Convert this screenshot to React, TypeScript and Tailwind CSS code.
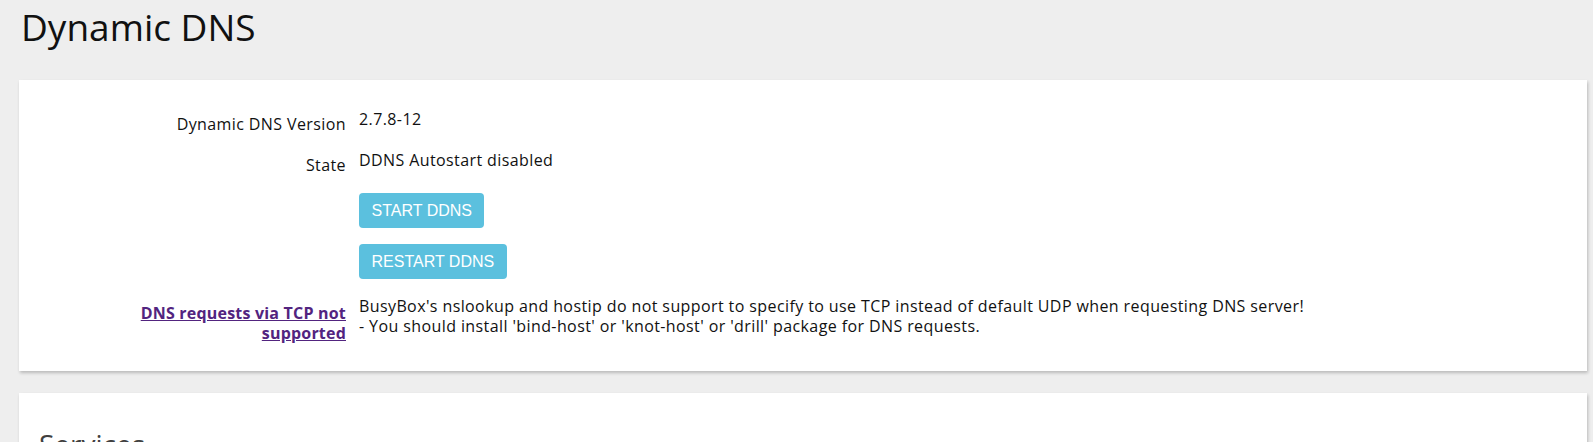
import React from "react";

const font = { fontFamily: '"Open Sans", "Noto Sans", sans-serif' };

function Row({ label, children, labelPt = "pt-[5px]", className = "" }: { label?: React.ReactNode; children: React.ReactNode; labelPt?: string; className?: string }) {
  return (
    <div className={`flex items-start ${className}`}>
      <div className={`w-[327px] shrink-0 pl-[115px] text-right ${labelPt}`}>{label}</div>
      <div className="ml-[13px] flex-1">{children}</div>
    </div>
  );
}

function Btn({ children }: { children: React.ReactNode }) {
  return (
    <button
      className="h-[35px] rounded-[4px] bg-[#5bc0de] px-[12.5px] text-[16px] leading-[35px] tracking-normal text-white"
      style={{ fontFamily: '"Liberation Sans", Arial, sans-serif' }}
    >
      {children}
    </button>
  );
}

export default function App() {
  return (
    <div className="min-h-screen overflow-hidden bg-[#eeeeee] text-[16px] leading-5 tracking-[0.4px] text-[#111]" style={font}>
      <h1 className="mt-[3px] ml-[21px] text-[37px] font-normal leading-[48px] tracking-normal text-[#111]">Dynamic DNS</h1>
      <div className="mt-[29px] ml-[19px] mr-[6px] h-[291px] bg-white pt-[29px] shadow-[1px_2px_3px_rgba(0,0,0,0.22)]">
        <Row label="Dynamic DNS Version">2.7.8-12</Row>
        <Row label="State" className="mt-[16px]">DDNS Autostart disabled</Row>
        <Row className="mt-[18px]">
          <Btn>START DDNS</Btn>
        </Row>
        <Row className="mt-[16px]">
          <Btn>RESTART DDNS</Btn>
        </Row>
        <Row
          className="mt-[17px]"
          labelPt="pt-[7px]"
          label={
            <a href="#" className="font-bold tracking-[0.2px] text-[#52247f] underline">
              DNS requests via TCP not supported
            </a>
          }
        >
          <div>BusyBox's nslookup and hostip do not support to specify to use TCP instead of default UDP when requesting DNS server!</div>
          <div>- You should install 'bind-host' or 'knot-host' or 'drill' package for DNS requests.</div>
        </Row>
      </div>
      <div className="mt-[22px] ml-[19px] mr-[6px] h-[200px] bg-white pt-[33px] pl-[20px] shadow-[1px_2px_3px_rgba(0,0,0,0.22)]">
        <h2 className="text-[28px] font-normal leading-[36px] tracking-normal text-[#404040]">Services</h2>
      </div>
    </div>
  );
}
